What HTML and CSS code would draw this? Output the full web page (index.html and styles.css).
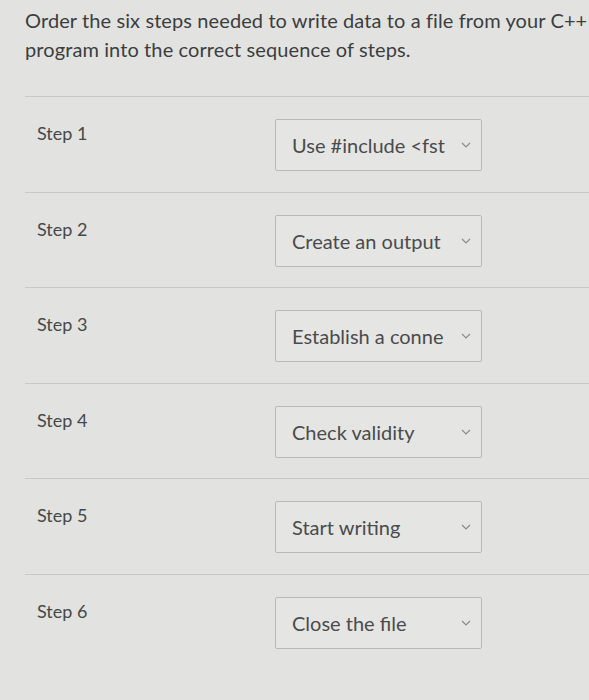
FILE: index.html
```html
<!DOCTYPE html>
<html>
<head>
<meta charset="utf-8">
<link rel="stylesheet" href="styles.css">
</head>
<body>
<div class="page">
  <p class="prompt">Order the six steps needed to write data to a file from your C++<br>program into the correct sequence of steps.</p>
  <div class="rows">
    <div class="row">
      <div class="label">Step 1</div>
      <div class="select"><span class="value">Use #include &lt;fst</span><svg class="chev" width="10" height="6" viewBox="0 0 10 6"><path d="M1 1l4 4 4-4" fill="none" stroke="#8a8b8d" stroke-width="1.2"/></svg></div>
    </div>
    <div class="row">
      <div class="label">Step 2</div>
      <div class="select"><span class="value">Create an output</span><svg class="chev" width="10" height="6" viewBox="0 0 10 6"><path d="M1 1l4 4 4-4" fill="none" stroke="#8a8b8d" stroke-width="1.2"/></svg></div>
    </div>
    <div class="row">
      <div class="label">Step 3</div>
      <div class="select"><span class="value">Establish a conne</span><svg class="chev" width="10" height="6" viewBox="0 0 10 6"><path d="M1 1l4 4 4-4" fill="none" stroke="#8a8b8d" stroke-width="1.2"/></svg></div>
    </div>
    <div class="row">
      <div class="label">Step 4</div>
      <div class="select"><span class="value">Check validity</span><svg class="chev" width="10" height="6" viewBox="0 0 10 6"><path d="M1 1l4 4 4-4" fill="none" stroke="#8a8b8d" stroke-width="1.2"/></svg></div>
    </div>
    <div class="row">
      <div class="label">Step 5</div>
      <div class="select"><span class="value">Start writing</span><svg class="chev" width="10" height="6" viewBox="0 0 10 6"><path d="M1 1l4 4 4-4" fill="none" stroke="#8a8b8d" stroke-width="1.2"/></svg></div>
    </div>
    <div class="row">
      <div class="label">Step 6</div>
      <div class="select"><span class="value">Close the file</span><svg class="chev" width="10" height="6" viewBox="0 0 10 6"><path d="M1 1l4 4 4-4" fill="none" stroke="#8a8b8d" stroke-width="1.2"/></svg></div>
    </div>
  </div>
</div>
</body>
</html>
```

FILE: styles.css
```css
html, body {
  margin: 0;
  padding: 0;
  background: #e2e3e0;
}
body {
  width: 589px;
  height: 700px;
  overflow: hidden;
  font-family: Lato, "Open Sans", sans-serif;
  color: #404142;
}
.page {
  padding: 0 0 0 25px;
  white-space: nowrap;
}
.prompt {
  margin: 0;
  padding-top: 6px;
  font-size: 20px;
  letter-spacing: 0.1px;
  line-height: 29px;
  color: #3c3d3e;
}
.rows {
  margin-top: 32px;
}
.row {
  display: flex;
  align-items: flex-start;
  height: 95.5px;
  border-top: 1px solid #c8c9c6;
  padding-top: 22px;
  box-sizing: border-box;
}
.label {
  width: 250px;
  box-sizing: border-box;
  padding-left: 12px;
  margin-top: 3px;
  font-size: 18px;
  line-height: 22px;
  color: #474849;
}
.select {
  width: 207px;
  height: 52px;
  box-sizing: border-box;
  border: 1px solid #b9bab8;
  border-radius: 2px;
  background: #e5e6e3;
  display: flex;
  align-items: center;
  padding: 0 10px 0 16px;
  gap: 8px;
}
.value {
  flex: 1;
  font-size: 20px;
  color: #4a4b4c;
}
.chev {
  flex: none;
}
```
